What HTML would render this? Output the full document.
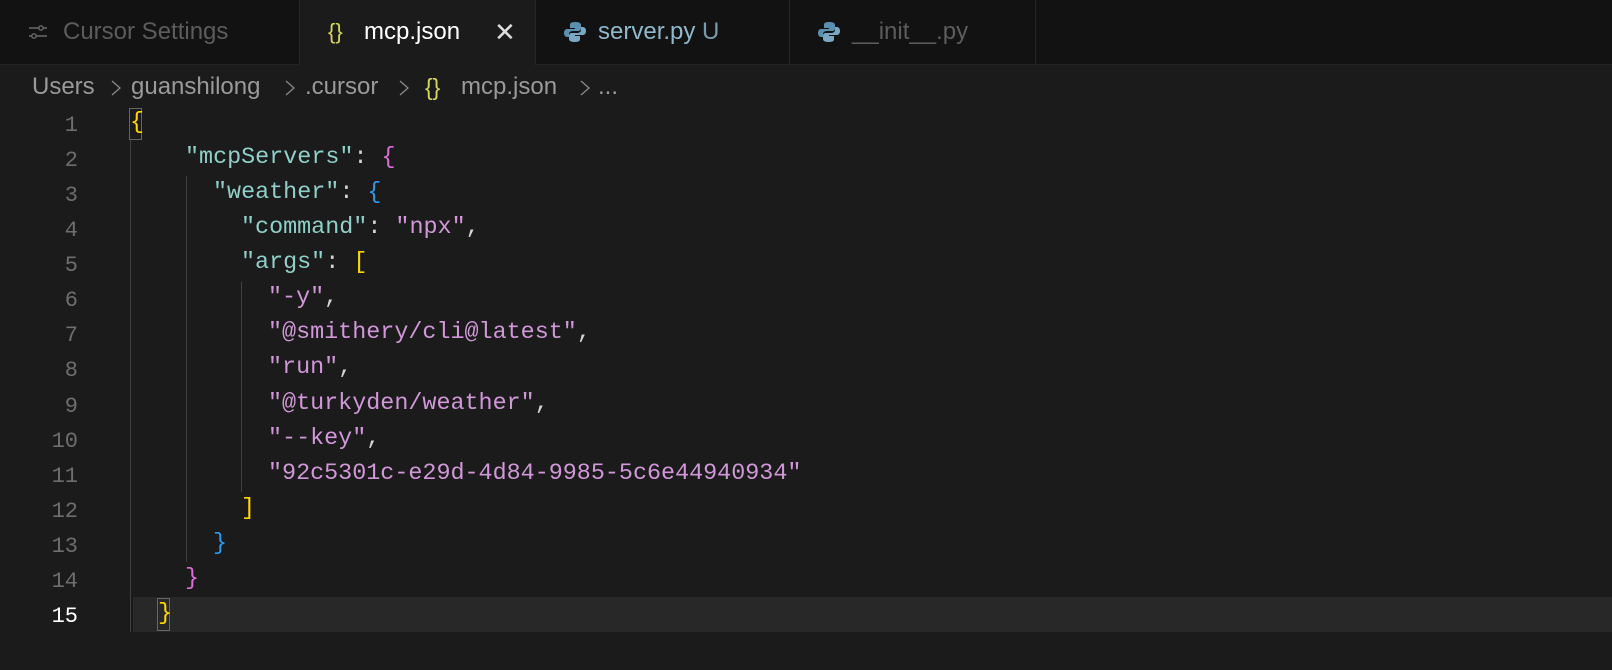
<!DOCTYPE html>
<html><head><style>
body{margin:0;width:1612px;height:670px;background:#1b1b1b;overflow:hidden;font-family:"Liberation Sans",sans-serif;position:relative}
.tabs{position:absolute;left:0;top:0;width:1612px;height:64px;background:#121212;border-bottom:1px solid #222}
.tab{position:absolute;top:0;height:64px;font-size:24px;line-height:64px;border-right:1px solid #262626;box-sizing:border-box}
.bc{position:absolute;top:70px;font-size:24px;color:#9a9a9a;line-height:34px;white-space:nowrap}
.ln{position:absolute;left:0;width:78px;text-align:right;font-family:"Liberation Mono",monospace;font-size:22px;color:#6e6e6e}
.code{position:absolute;font-family:"Liberation Mono",monospace;font-size:23.4px;white-space:pre;color:#d4d4d4}
.k{color:#8fd0c8}.s{color:#d197d9}.y{color:#ffd700}.p{color:#da70d6}.b{color:#2b9bf0}
.g{position:absolute;width:1px;background:#404040}
.chev{position:absolute;top:80px}
</style></head><body>
<div class="tabs">
 <div class="tab" style="left:0;width:300px;color:#5c5c5c;padding-left:63px">Cursor Settings
  <svg style="position:absolute;left:28px;top:22px" width="20" height="20" viewBox="0 0 20 20" fill="none" stroke="#6a6a6a" stroke-width="1.4"><line x1="1" y1="6" x2="19" y2="6"/><circle cx="13" cy="6" r="2.2" fill="#121212"/><line x1="1" y1="14" x2="19" y2="14"/><circle cx="6" cy="14" r="2.2" fill="#121212"/></svg></div>
 <div class="tab" style="left:300px;width:236px;background:#1b1b1b;height:65px;color:#fff;padding-left:64px"><span style="position:absolute;left:28px;color:#d7d75a;font-size:22px">{}</span>mcp.json<span style="position:absolute;left:194px;color:#ddd;font-size:26px">✕</span></div>
 <div class="tab" style="left:536px;width:254px;color:#8fb8cc;padding-left:62px"><svg style="position:absolute;left:28px;top:21px" width="22" height="22" viewBox="0 0 22 22"><path d="M11 1c-5 0-5 2-5 3v3h5v1H3c-2 0-3 2-3 4s1 4 3 4h2v-3c0-2 2-3 4-3h5c2 0 3-1 3-3V4c0-2-2-3-6-3z" fill="#5a8fb0"/><path d="M11 21c5 0 5-2 5-3v-3h-5v-1h8c2 0 3-2 3-4s-1-4-3-4h-2v3c0 2-2 3-4 3H8c-2 0-3 1-3 3v3c0 2 2 3 6 3z" fill="#7aa7c4"/></svg>server.py <span style="color:#7a9aaa">U</span></div>
 <div class="tab" style="left:790px;width:246px;color:#5c5c5c;padding-left:62px"><svg style="position:absolute;left:28px;top:21px" width="22" height="22" viewBox="0 0 22 22"><path d="M11 1c-5 0-5 2-5 3v3h5v1H3c-2 0-3 2-3 4s1 4 3 4h2v-3c0-2 2-3 4-3h5c2 0 3-1 3-3V4c0-2-2-3-6-3z" fill="#5a8fb0"/><path d="M11 21c5 0 5-2 5-3v-3h-5v-1h8c2 0 3-2 3-4s-1-4-3-4h-2v3c0 2-2 3-4 3H8c-2 0-3 1-3 3v3c0 2 2 3 6 3z" fill="#7aa7c4"/></svg>__init__.py</div>
</div>
<div class="bc" style="left:32px">Users</div>
<div class="bc" style="left:131px">guanshilong</div>
<div class="bc" style="left:305px">.cursor</div>
<div class="bc" style="left:425px;color:#d7d75a;font-size:23px">{}</div>
<div class="bc" style="left:461px">mcp.json</div>
<div class="bc" style="left:598px">...</div>
<svg class="chev" style="left:110px" width="12" height="16" viewBox="0 0 12 16"><path d="M2 1l8 7-8 7" fill="none" stroke="#8a8a8a" stroke-width="1.3"/></svg>
<svg class="chev" style="left:284px" width="12" height="16" viewBox="0 0 12 16"><path d="M2 1l8 7-8 7" fill="none" stroke="#8a8a8a" stroke-width="1.3"/></svg>
<svg class="chev" style="left:398px" width="12" height="16" viewBox="0 0 12 16"><path d="M2 1l8 7-8 7" fill="none" stroke="#8a8a8a" stroke-width="1.3"/></svg>
<svg class="chev" style="left:579px" width="12" height="16" viewBox="0 0 12 16"><path d="M2 1l8 7-8 7" fill="none" stroke="#8a8a8a" stroke-width="1.3"/></svg>
<div style="position:absolute;left:133px;top:597px;width:1479px;height:35px;background:#282828"></div>
<div class="g" style="left:130px;top:140px;height:492px"></div>
<div class="g" style="left:186px;top:176px;height:386px"></div>
<div class="g" style="left:241px;top:282px;height:210px"></div>
<div style="position:absolute;left:129px;top:108px;width:13px;height:32px;border:1px solid #666;box-sizing:border-box"></div>
<div style="position:absolute;left:157px;top:598px;width:13px;height:33px;border:1px solid #666;box-sizing:border-box"></div>
<div id="lines"></div>
<script>
var L=[[130,'<span class="y">{</span>'],[185,'<span class="k">"mcpServers"</span>: <span class="p">{</span>'],[213,'<span class="k">"weather"</span>: <span class="b">{</span>'],[241,'<span class="k">"command"</span>: <span class="s">"npx"</span>,'],[241,'<span class="k">"args"</span>: <span class="y">[</span>'],[268,'<span class="s">"-y"</span>,'],[268,'<span class="s">"@smithery/cli@latest"</span>,'],[268,'<span class="s">"run"</span>,'],[268,'<span class="s">"@turkyden/weather"</span>,'],[268,'<span class="s">"--key"</span>,'],[268,'<span class="s">"92c5301c-e29d-4d84-9985-5c6e44940934"</span>'],[241,'<span class="y">]</span>'],[213,'<span class="b">}</span>'],[185,'<span class="p">}</span>'],[158,'<span class="y">}</span>']];
var h='';L.forEach(function(l,i){var t=106+i*35.07;h+='<div class="ln" style="top:'+(t+3)+'px;line-height:34px;'+(i==14?'color:#fff':'')+'">'+(i+1)+'</div><div class="code" style="left:'+(l[0])+'px;top:'+t+'px;line-height:34px">'+l[1]+'</div>';});
document.getElementById('lines').innerHTML=h;
</script>
</body></html>
